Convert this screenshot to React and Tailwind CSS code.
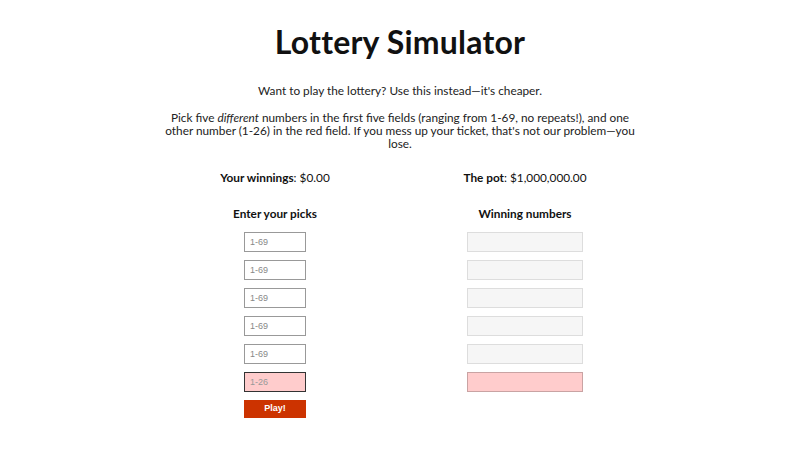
import React, { useState } from 'react';

const PICKS = ['1-69', '1-69', '1-69', '1-69', '1-69'];

function PickInput({ placeholder, red, value, onChange }) {
  return (
    <input
      type="text"
      value={value}
      onChange={onChange}
      placeholder={placeholder}
      className={
        red
          ? 'w-[62px] h-[20px] px-[5px] text-[9px] font-[Liberation_Sans,Arial,sans-serif] border border-[#333] bg-[#ffcccc] placeholder:text-[#999] outline-none'
          : 'w-[62px] h-[20px] px-[5px] text-[9px] font-[Liberation_Sans,Arial,sans-serif] border border-[#999] bg-white placeholder:text-[#888] outline-none'
      }
    />
  );
}

function ResultBox({ red }) {
  return (
    <div
      className={
        red
          ? 'w-[116px] h-[20px] border border-[#c9a3a3] bg-[#ffcccc]'
          : 'w-[116px] h-[20px] border border-[#ddd] bg-[#f6f6f6]'
      }
    />
  );
}

export default function App() {
  const [picks, setPicks] = useState(['', '', '', '', '', '']);

  const setPick = (i, v) => {
    const next = [...picks];
    next[i] = v;
    setPicks(next);
  };

  return (
    <div className="w-[800px] h-[450px] bg-white text-[#111] font-[Lato,sans-serif] flex flex-col items-center">
      <h1 className="mt-[24px] text-[32px] leading-[36px] font-bold tracking-[0.2px]">Lottery Simulator</h1>
      <p className="mt-[24px] text-[11.8px] leading-[14px] text-[#222]">
        Want to play the lottery? Use this instead—it's cheaper.
      </p>
      <p className="mt-[13px] w-[472px] text-center text-[11.8px] leading-[13px] text-[#222]">
        Pick five <em>different</em> numbers in the first five fields (ranging from 1-69, no repeats!), and one
        other number (1-26) in the red field. If you mess up your ticket, that's not our problem—you lose.
      </p>

      <div className="mt-[21px] w-[500px] grid grid-cols-2">
        <div className="flex flex-col items-center">
          <div className="text-[11.8px] leading-[14px]">
            <span className="font-bold">Your winnings</span>: $0.00
          </div>
          <div className="mt-[22px] text-[11.8px] leading-[14px] font-bold">Enter your picks</div>
          <div className="mt-[11px] flex flex-col gap-[8px]">
            {PICKS.map((p, i) => (
              <PickInput key={i} placeholder={p} value={picks[i]} onChange={(e) => setPick(i, e.target.value)} />
            ))}
            <PickInput red placeholder="1-26" value={picks[5]} onChange={(e) => setPick(5, e.target.value)} />
            <button className="w-[62px] h-[18px] bg-[#cc3300] text-white text-[9px] font-bold font-[Liberation_Sans,Arial,sans-serif]">
              Play!
            </button>
          </div>
        </div>

        <div className="flex flex-col items-center">
          <div className="text-[11.8px] leading-[14px]">
            <span className="font-bold">The pot</span>: $1,000,000.00
          </div>
          <div className="mt-[22px] text-[11.8px] leading-[14px] font-bold">Winning numbers</div>
          <div className="mt-[11px] flex flex-col gap-[8px]">
            <ResultBox />
            <ResultBox />
            <ResultBox />
            <ResultBox />
            <ResultBox />
            <ResultBox red />
          </div>
        </div>
      </div>
    </div>
  );
}
